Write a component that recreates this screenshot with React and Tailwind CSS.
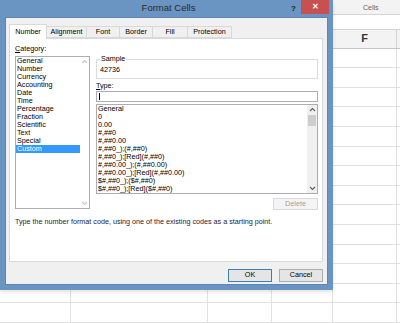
const categories = [
  "General",
  "Number",
  "Currency",
  "Accounting",
  "Date",
  "Time",
  "Percentage",
  "Fraction",
  "Scientific",
  "Text",
  "Special",
  "Custom",
];

const formats = [
  "General",
  "0",
  "0.00",
  "#,##0",
  "#,##0.00",
  "#,##0_);(#,##0)",
  "#,##0_);[Red](#,##0)",
  "#,##0.00_);(#,##0.00)",
  "#,##0.00_);[Red](#,##0.00)",
  "$#,##0_);($#,##0)",
  "$#,##0_);[Red]($#,##0)",
];

const tabs = [
  { label: "Number", w: "w-[38px]" },
  { label: "Alignment", w: "w-[40px]" },
  { label: "Font", w: "w-[33px]" },
  { label: "Border", w: "w-[33px]" },
  { label: "Fill", w: "w-[35px]" },
  { label: "Protection", w: "w-[44px]" },
];

const columns = ["w-[71px]", "w-[137px]", "w-[64px]", "w-[61px]", "w-[64px]", "w-[20px]"];

function Sheet() {
  return (
    <div className="flex flex-col w-[400px] h-[323px] bg-white overflow-hidden">
      <div className="h-[17px] bg-[#f3f3f3] border-b border-[#d4d4d4] pl-[363px] pt-[3px] text-[7px] leading-[9px] text-[#666]">
        Cells
      </div>
      <div className="h-[18px] bg-white border-b border-[#d4d4d4]" />
      <div className="h-[23px] flex bg-[#f3f3f3] border-b border-[#c6c6c6]">
        {columns.map((w, i) => (
          <div
            key={i}
            className={`${w} shrink-0 border-r border-[#d4d4d4] flex items-center justify-center text-[11px] font-bold text-[#333]`}
          >
            {i === 4 ? "F" : ""}
          </div>
        ))}
      </div>
      {Array.from({ length: 14 }).map((_, r) => (
        <div key={r} className="h-[19.6px] shrink-0 flex border-b border-[#e1e1e1]">
          {columns.map((w, i) => (
            <div key={i} className={`${w} shrink-0 border-r border-[#e1e1e1]`} />
          ))}
        </div>
      ))}
    </div>
  );
}

function Chevron({ up }) {
  return (
    <svg width="7" height="5" viewBox="0 0 7 5">
      <path
        d={up ? "M1 4 L3.5 1.5 L6 4" : "M1 1 L3.5 3.5 L6 1"}
        fill="none"
        stroke="currentColor"
        strokeWidth="1.1"
      />
    </svg>
  );
}

function CategoryList() {
  return (
    <div className="w-[75px] h-[153px] border border-[#abadb3] bg-white flex">
      <div className="flex-1 flex flex-col">
        {categories.map((c) => (
          <div
            key={c}
            className={
              c === "Custom"
                ? "h-[8px] leading-[8px] pl-[1px] bg-[#3399ff] text-white"
                : "h-[8px] leading-[8px] pl-[1px] text-black"
            }
          >
            {c}
          </div>
        ))}
      </div>
      <div className="w-[9px] flex flex-col justify-between items-center py-[2px] text-[#c8c8c8]">
        <Chevron up />
        <Chevron />
      </div>
    </div>
  );
}

function FormatList() {
  return (
    <div className="h-[90px] mt-[2px] border border-[#abadb3] bg-white flex">
      <div className="flex-1 flex flex-col pl-[1px]">
        {formats.map((f, i) => (
          <div key={i} className="h-[8px] leading-[8px] text-black whitespace-nowrap">
            {f}
          </div>
        ))}
      </div>
      <div className="w-[10px] bg-[#f0f0f0] flex flex-col items-center justify-between py-[2px] text-[#606060]">
        <div className="flex flex-col items-center">
          <Chevron up />
          <div className="mt-[3px] w-[8px] h-[11px] bg-[#cdcdcd]" />
        </div>
        <Chevron />
      </div>
    </div>
  );
}

function Dialog() {
  return (
    <div className="absolute left-0 top-0 w-[333px] h-[290px] bg-[#6a94c2] flex flex-col px-[5px] pb-[5px] shadow-[0_2px_4px_rgba(0,0,0,0.12)]">
      <div className="relative h-[17px] shrink-0 flex items-center justify-center">
        <span className="text-[9.5px] text-[#2a2a2a] pl-[4px]">Format Cells</span>
        <span className="absolute left-[286px] top-[3px] text-[8px] font-bold text-[#1a1a1a]">?</span>
        <div className="absolute left-[296px] top-0 w-[28px] h-[14px] bg-[#c75050] flex items-center justify-center text-white text-[8px] font-bold">
          ✕
        </div>
      </div>
      <div className="flex-1 bg-[#f0f0f0] border border-[#5d86b3] flex flex-col pl-[3px] pr-[4px]">
        <div className="flex items-end h-[20px] pt-[5px]">
          {tabs.map((t) => (
            <div
              key={t.label}
              className={
                t.label === "Number"
                  ? `${t.w} h-[15px] -mb-px z-10 bg-white border border-b-0 border-[#d9d9d9] flex items-center justify-center text-black`
                  : `${t.w} h-[12px] bg-[#f0f0f0] border border-l-0 border-[#d9d9d9] flex items-center justify-center text-black`
              }
            >
              {t.label}
            </div>
          ))}
        </div>
        <div className="h-[224px] bg-white border border-[#d9d9d9] flex flex-col pl-[5px] pr-[4px]">
          <div className="flex gap-[6px]">
            <div className="flex flex-col">
              <div className="mt-[5px] h-[10px] leading-[10px] mb-[2px]">
                <span className="underline">C</span>ategory:
              </div>
              <CategoryList />
            </div>
            <div className="flex-1 flex flex-col">
              <fieldset className="mt-[15px] h-[25px] border border-[#dcdcdc] px-[3px]">
                <legend className="px-[1px] leading-[10px]">Sample</legend>
                <div className="leading-[10px] mt-[1px]">42736</div>
              </fieldset>
              <div className="mt-[2px] h-[10px] leading-[10px]">
                <span className="underline">T</span>ype:
              </div>
              <div className="h-[11px] border border-[#abadb3] bg-white flex items-center pl-[2px]">
                <div className="w-px h-[7px] bg-black" />
              </div>
              <FormatList />
              <div className="flex justify-end mt-[4px]">
                <div className="w-[45px] h-[12px] bg-[#f4f4f4] border border-[#dadada] flex items-center justify-center text-[#a0a0a0]">
                  Delete
                </div>
              </div>
            </div>
          </div>
          <div className="mt-[7px] leading-[10px] text-[#1e1e2e] whitespace-nowrap">
            Type the number format code, using one of the existing codes as a starting point.
          </div>
        </div>
        <div className="flex justify-end gap-[7px] mt-[7px]">
          <div className="w-[44px] h-[13px] bg-[#e5e5e5] border border-[#3c7fb1] flex items-center justify-center text-black">
            OK
          </div>
          <div className="w-[44px] h-[13px] bg-[#e5e5e5] border border-[#acacac] flex items-center justify-center text-black">
            Cancel
          </div>
        </div>
      </div>
    </div>
  );
}

export default function App() {
  return (
    <div className="relative w-[400px] h-[323px] overflow-hidden font-['Liberation_Sans',Arial,sans-serif] text-[7.2px] text-black">
      <Sheet />
      <Dialog />
    </div>
  );
}
